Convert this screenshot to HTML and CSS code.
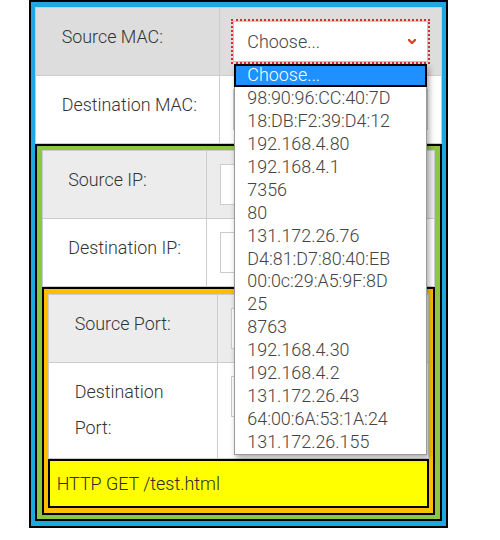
FILE: index.html
```html
<!DOCTYPE html>
<html lang="en">
<head>
<meta charset="utf-8">
<title>Packet builder</title>
<link rel="stylesheet" href="styles.css">
</head>
<body>
<div class="frame frame-eth">
  <table class="fields fields-eth">
    <colgroup><col class="label-col"><col></colgroup>
    <tr class="row-active">
      <th>Source MAC:</th>
      <td>
        <div class="select is-open">
          <span class="select-value">Choose...</span>
          <svg class="chevron" viewBox="0 0 8 5" width="8" height="5"><path d="M1 1 L4 4 L7 1" /></svg>
          <ul class="options">
            <li class="option is-selected">Choose...</li>
            <li class="option">98:90:96:CC:40:7D</li>
            <li class="option">18:DB:F2:39:D4:12</li>
            <li class="option">192.168.4.80</li>
            <li class="option">192.168.4.1</li>
            <li class="option">7356</li>
            <li class="option">80</li>
            <li class="option">131.172.26.76</li>
            <li class="option">D4:81:D7:80:40:EB</li>
            <li class="option">00:0c:29:A5:9F:8D</li>
            <li class="option">25</li>
            <li class="option">8763</li>
            <li class="option">192.168.4.30</li>
            <li class="option">192.168.4.2</li>
            <li class="option">131.172.26.43</li>
            <li class="option">64:00:6A:53:1A:24</li>
            <li class="option">131.172.26.155</li>
          </ul>
        </div>
      </td>
    </tr>
    <tr>
      <th>Destination MAC:</th>
      <td><div class="select"></div></td>
    </tr>
  </table>
  <div class="frame frame-ip">
    <table class="fields fields-ip">
      <colgroup><col class="label-col"><col></colgroup>
      <tr class="row-shaded">
        <th>Source IP:</th>
        <td><div class="select"></div></td>
      </tr>
      <tr>
        <th>Destination IP:</th>
        <td><div class="select"></div></td>
      </tr>
    </table>
    <div class="frame frame-tcp">
      <table class="fields fields-tcp">
        <colgroup><col class="label-col"><col></colgroup>
        <tr class="row-shaded">
          <th>Source Port:</th>
          <td><div class="select"></div></td>
        </tr>
        <tr>
          <th class="label-wrap">Destination Port:</th>
          <td><div class="select"></div></td>
        </tr>
      </table>
      <div class="frame frame-http">HTTP GET /test.html</div>
    </div>
  </div>
</div>
</body>
</html>
```

FILE: styles.css
```css
html, body {
  margin: 0;
  padding: 0;
  background: #fff;
}

body {
  font-family: Roboto, "Noto Sans", "Liberation Sans", sans-serif;
  font-size: 17.9px;
  font-weight: 300;
  color: #333;
}

.frame {
  box-sizing: border-box;
  border: 2px solid #000;
  padding: 4.5px;
}

.frame-eth {
  width: 419.67px;
  margin-left: 28.67px;
  background: #1da8e0;
}

.frame-ip {
  background: #8dc641;
}

.frame-tcp {
  background: #fdbd00;
}

.frame-http {
  background: #ffff00;
  padding: 12px 6.5px;
  line-height: 21.7px;
  color: #2b2b2b;
}

.fields {
  width: 100%;
  border-collapse: collapse;
  table-layout: fixed;
  background: #fff;
}

.fields th,
.fields td {
  border: 1px solid #ccc;
}

.fields th {
  text-align: left;
  font-weight: 300;
  padding: 11px 10px 11px 25.5px;
  line-height: 36.5px;
  vertical-align: top;
  white-space: nowrap;
}

.fields th.label-wrap {
  white-space: normal;
  padding-right: 30px;
}

.fields td {
  padding: 13px 13px 13px 12.5px;
  vertical-align: top;
}

.row-shaded {
  background: #ececec;
}

.row-active {
  background: #dddddd;
}

.fields-eth .label-col {
  width: 184px;
}

.fields-ip .label-col {
  width: 164.5px;
}

.fields-tcp .label-col {
  width: 169px;
}

.select {
  position: relative;
  box-sizing: border-box;
  height: 41px;
  border: 1px solid #ccc;
  background: #fff;
  color: #444;
  display: flex;
  align-items: center;
  padding: 0 11px 0 13.7px;
}

.select-value {
  flex: 1;
  white-space: nowrap;
  overflow: hidden;
}

.select.is-open {
  outline: 2px dotted #e3262b;
  border-color: #e9b8b8;
}

.chevron {
  display: block;
  flex: none;
  margin-top: 1px;
}

.chevron path {
  fill: none;
  stroke: #d9472f;
  stroke-width: 2.4;
  stroke-linecap: square;
}

.options {
  position: absolute;
  top: 42.5px;
  left: 0;
  right: 0;
  margin: 0;
  padding: 0;
  list-style: none;
  background: #fff;
  border: 1px solid #9a9a9a;
  box-shadow: 2px 3px 6px rgba(0, 0, 0, 0.35);
  z-index: 10;
  color: #444;
}

.option {
  height: 22.95px;
  line-height: 22.95px;
  padding-left: 12.7px;
  white-space: nowrap;
}

.option.is-selected {
  margin: -1px -1px 0;
  padding-left: 13.7px;
  background: #1e90ff;
  color: #fff;
  box-shadow: inset 0 0 0 2px #000;
}
```
